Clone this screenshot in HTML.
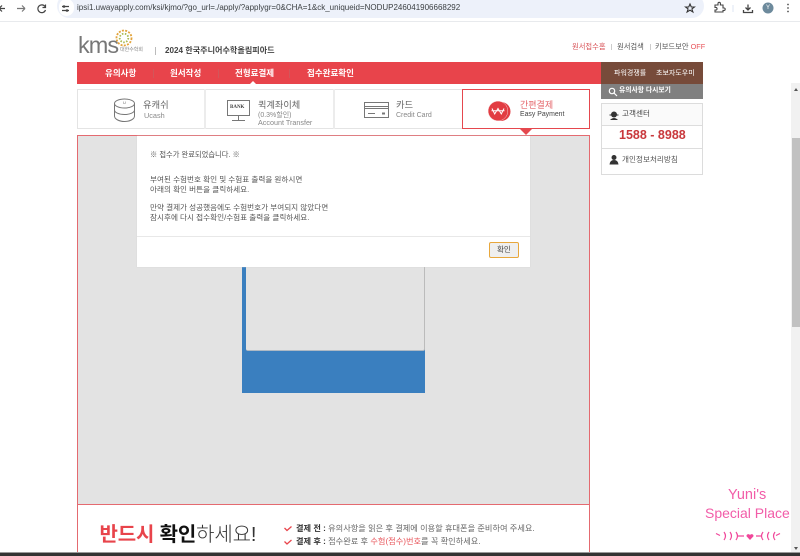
<!DOCTYPE html>
<html lang="ko"><head><meta charset="utf-8"><title>kms</title>
<style>
html,body{margin:0;padding:0;width:800px;height:556px;overflow:hidden;background:#fff}
body{font-family:"Liberation Sans","Noto Sans CJK KR",sans-serif;position:relative}
.a{position:absolute;white-space:nowrap;line-height:1}
.b{position:absolute}
svg{position:absolute;overflow:visible}
</style></head><body>
<!-- browser chrome -->
<div class="b" style="left:0;top:0;width:800px;height:21px;background:#fff;border-bottom:1px solid #e8eaed"></div>
<div class="b" style="left:57px;top:-6px;width:647px;height:24px;background:#edf1fa;border-radius:12px"></div>
<div class="b" style="left:59px;top:-1px;width:15px;height:17px;background:#fff;border-radius:8px"></div>
<svg style="left:0;top:0" width="800" height="21" fill="none">
<path d="M-1 8.500H5M-1 8.500L2 5.500M-1 8.500L2 11.500" stroke="#444" stroke-width="1.200"/>
<path d="M17 8.500H25M25 8.500L22 5.500M25 8.500L22 11.500" stroke="#777" stroke-width="1.200"/>
<path d="M45 6.500A3.900 3.900 0 1 0 45.500 10M45.500 4.500V7.500H42.500" stroke="#444" stroke-width="1.200"/>
<path d="M62 6.500H69M62 10.500H69" stroke="#444" stroke-width="1.200"/>
<circle cx="64" cy="6.500" r="1.300" fill="#444"/><circle cx="67" cy="10.500" r="1.300" fill="#444"/>
<path d="M690 4L691.300 7H694.400L691.900 9L692.900 12L690 10.200L687.100 12L688.100 9L685.600 7H688.700Z" stroke="#333" stroke-width="1.100"/>
<path d="M715 6H718V4.500A1.200 1.200 0 0 1 720.400 4.500V6H723V9H724A1.200 1.200 0 0 1 724 11.400H723V13H715V11H716.400A1.500 1.500 0 0 0 716.400 8.500H715Z" stroke="#444" stroke-width="1.100" transform="translate(0,-1)"/>
<path d="M748 4.500V10M745.500 7.500L748 10L750.500 7.500M743.500 10V12.500H752.500V10" stroke="#444" stroke-width="1.300"/>
<circle cx="768" cy="8" r="5.500" fill="#6d8a9c"/>
<circle cx="788" cy="4.500" r=".9" fill="#555"/><circle cx="788" cy="8" r=".9" fill="#555"/><circle cx="788" cy="11.500" r=".9" fill="#555"/>
<path d="M733 5V12" stroke="#dde6f3" stroke-width="1"/>
</svg>
<div class="a" style="left:766px;top:5px;font-size:6px;color:#fff">Y</div>
<div class="a" style="left:77px;top:4px;font-size:8px;color:#3c4043">ipsi1.uwayapply.com/ksi/kjmo/?go_url=./apply/?applygr=0&amp;CHA=1&amp;ck_uniqueid=NODUP246041906668292</div>

<!-- logo + header -->
<div class="a" style="left:78px;top:34px;font-size:23.500px;color:#777;letter-spacing:-1px">kms</div>
<svg style="left:115px;top:29px" width="19" height="19" fill="none">
<g stroke="#e2a33b" stroke-width="1.800" stroke-dasharray="2 1.300"><circle cx="9" cy="9" r="7.500"/></g>
<g stroke="#a8b84c" stroke-width="1.800" stroke-dasharray="1.500 1.500"><circle cx="9" cy="9" r="4.300"/></g>
</svg>
<div class="a" style="left:120px;top:48px;font-size:5px;color:#888">대한수학회</div>
<div class="b" style="left:155px;top:47px;width:1px;height:8px;background:#bbb"></div>
<div class="a" style="left:165px;top:47px;font-size:8.100px;font-weight:bold;color:#444">2024 한국주니어수학올림피아드</div>
<div class="a" style="left:572px;top:42.500px;font-size:7.300px;color:#d9555a">원서접수홈</div>
<div class="b" style="left:611px;top:44px;width:1px;height:6px;background:#ccc"></div>
<div class="a" style="left:617px;top:42.500px;font-size:7.300px;color:#555">원서검색</div>
<div class="b" style="left:650px;top:44px;width:1px;height:6px;background:#ccc"></div>
<div class="a" style="left:655px;top:42.500px;font-size:7.300px;color:#555">키보드보안 <span style="color:#e8545a">OFF</span></div>

<!-- nav -->
<div class="b" style="left:77px;top:62px;width:524px;height:22px;background:#e8444b"></div>
<div class="b" style="left:601px;top:62px;width:102px;height:22px;background:#774b3a"></div>
<div class="a" style="left:105px;top:69px;font-size:8.500px;font-weight:bold;color:#fff">유의사항</div>
<div class="b" style="left:153px;top:69px;width:1px;height:9px;background:#d2565a"></div>
<div class="a" style="left:170px;top:69px;font-size:8.500px;font-weight:bold;color:#fff">원서작성</div>
<div class="b" style="left:218px;top:69px;width:1px;height:9px;background:#d2565a"></div>
<div class="a" style="left:235px;top:69px;font-size:8.500px;font-weight:bold;color:#fff">전형료결제</div>
<div class="b" style="left:289px;top:69px;width:1px;height:9px;background:#d2565a"></div>
<div class="a" style="left:307px;top:69px;font-size:8.500px;font-weight:bold;color:#fff">접수완료확인</div>
<div class="b" style="left:250px;top:81px;width:0;height:0;border:3px solid transparent;border-bottom-color:#fff;border-top:0"></div>
<div class="a" style="left:614px;top:70px;font-size:7px;color:#fff">파워경쟁률</div>
<div class="a" style="left:656px;top:70px;font-size:7px;color:#fff">초보자도우미</div>

<!-- tabs -->
<div class="b" style="left:77px;top:89px;width:385px;height:38px;border:1px solid #e4e4e4;border-right:0"></div>
<div class="b" style="left:204px;top:89px;width:2px;height:40px;background:#ececec"></div>
<div class="b" style="left:333px;top:89px;width:2px;height:40px;background:#ececec"></div>
<div class="b" style="left:462px;top:89px;width:128px;height:40px;border:1.500px solid #e5484e;box-sizing:border-box;background:#fff"></div>
<div class="b" style="left:520px;top:129px;width:0;height:0;border-left:6px solid transparent;border-right:6px solid transparent;border-top:6px solid #e5484e"></div>
<svg style="left:0;top:0" width="800" height="140" fill="none" stroke="#777" stroke-width="1">
<ellipse cx="124.500" cy="103.500" rx="10" ry="4.500"/>
<path d="M114.500 103.500V110C114.500 112.500 119 114.500 124.500 114.500S134.500 112.500 134.500 110V103.500M114.500 110V116C114.500 119 119 121.500 124.500 121.500S134.500 119 134.500 116V110"/>
<rect x="227.500" y="100.500" width="22" height="15"/>
<path d="M238.500 115.500V120M232 120.500H245"/>
<rect x="364.500" y="102.500" width="24" height="15"/>
<path d="M364.500 106.500H388.500M364.500 108.500H388.500M368 113.500H375"/>
<path d="M382 113.500H385" stroke-width="2"/>
<circle cx="501" cy="111.500" r="9.500" fill="#e23c42" stroke="none"/>
<circle cx="498" cy="111" r="9.800" fill="#e23c42" stroke="#f6c9cb" stroke-width=".5"/>
<path d="M492 108.500L494.700 114L498 108.500L501.300 114L504 108.500M491.500 110.800H504.500" stroke="#fff" stroke-width="1"/>
</svg>
<div class="a" style="left:124.500px;top:100.500px;font-size:4px;color:#666;transform:translateX(-50%)">U</div>
<div class="a" style="left:143px;top:100.500px;font-size:9.300px;color:#666">유캐쉬</div>
<div class="a" style="left:144px;top:111.500px;font-size:7.300px;color:#888">Ucash</div>
<div class="a" style="left:230px;top:105px;font-size:5px;color:#444;font-family:'Liberation Serif',serif;font-weight:bold">BANK</div>
<div class="a" style="left:258px;top:100.500px;font-size:9.200px;color:#666">퀵계좌이체</div>
<div class="a" style="left:258px;top:111.500px;font-size:7px;color:#888">(0.3%할인)</div>
<div class="a" style="left:258px;top:118.500px;font-size:7.200px;color:#888">Account Transfer</div>
<div class="a" style="left:396px;top:100.500px;font-size:9.300px;color:#666">카드</div>
<div class="a" style="left:396px;top:111.500px;font-size:7px;color:#888">Credit Card</div>
<div class="a" style="left:520px;top:100.500px;font-size:9px;color:#e5666b">간편결제</div>
<div class="a" style="left:520px;top:111.500px;font-size:6.900px;color:#444">Easy Payment</div>

<!-- right side -->
<div class="b" style="left:601px;top:84px;width:102px;height:15px;background:#808080"></div>
<svg style="left:608px;top:87px" width="10" height="10" fill="none" stroke="#fff" stroke-width="1.200"><circle cx="4" cy="4" r="2.700"/><path d="M6 6L9 9"/></svg>
<div class="a" style="left:619px;top:88px;font-size:6.800px;font-weight:bold;color:#fff">유의사항 다시보기</div>
<div class="b" style="left:601px;top:103px;width:102px;height:72px;border:1px solid #dcdcdc;box-sizing:border-box;background:#fff"></div>
<div class="b" style="left:602px;top:104px;width:100px;height:21px;background:#fafafa;border-bottom:1px solid #ddd"></div>
<div class="b" style="left:602px;top:148px;width:100px;height:1px;background:#ddd"></div>
<svg style="left:609px;top:111px" width="10" height="10"><circle cx="5" cy="3.500" r="3" fill="#333"/><path d="M1 9Q5 5 9 9Z" fill="#333"/><path d="M0.500 4H9.500" stroke="#333"/></svg>
<div class="a" style="left:622px;top:110px;font-size:7.600px;color:#444">고객센터</div>
<div class="a" style="left:619px;top:129px;font-size:12.500px;font-weight:bold;color:#c9383c">1588 - 8988</div>
<svg style="left:609px;top:155px" width="10" height="10"><circle cx="5" cy="2.500" r="2.500" fill="#333"/><path d="M0.500 9.500Q1 5 5 5T9.500 9.500Z" fill="#333"/></svg>
<div class="a" style="left:622px;top:156px;font-size:7.600px;color:#555">개인정보처리방침</div>

<!-- content -->
<div class="b" style="left:77px;top:135px;width:513px;height:370px;background:#e3e3e3;border:1px solid #e46a70;box-sizing:border-box"></div>
<div class="b" style="left:77px;top:505px;width:1px;height:47px;background:#e46a70"></div>
<div class="b" style="left:589px;top:505px;width:1px;height:47px;background:#e46a70"></div>
<div class="b" style="left:242px;top:260px;width:183px;height:133px;background:#3a7fbf"></div>
<div class="b" style="left:246px;top:260px;width:179px;height:90.500px;background:#e3e3e3;border-right:1px solid #bbb;border-bottom:1px solid #aeb9c4;border-radius:0 0 2px 2px;box-sizing:border-box"></div>
<div class="b" style="left:137px;top:136px;width:393px;height:131px;background:#fff;box-shadow:0 0 1px #ccc"></div>
<div class="a" style="left:150px;top:150.500px;font-size:7.300px;color:#555">※ 접수가 완료되었습니다. ※</div>
<div class="a" style="left:150px;top:176px;font-size:7.600px;color:#555">부여된 수험번호 확인 및 수험표 출력을 원하시면</div>
<div class="a" style="left:150px;top:186px;font-size:7.600px;color:#555">아래의 확인 버튼을 클릭하세요.</div>
<div class="a" style="left:150px;top:203.500px;font-size:7.600px;color:#555">만약 결제가 성공했음에도 수험번호가 부여되지 않았다면</div>
<div class="a" style="left:150px;top:213.500px;font-size:7.600px;color:#555">잠시후에 다시 접수확인/수험표 출력을 클릭하세요.</div>
<div class="b" style="left:137px;top:236px;width:393px;height:1px;background:#e8e8e8"></div>
<div class="b" style="left:489px;top:242px;width:30px;height:16px;background:#efefef;border:1.500px solid #e8a73c;border-radius:2px;box-sizing:border-box"></div>
<div class="a" style="left:497px;top:246px;font-size:7.500px;color:#444">확인</div>

<!-- footer notice -->
<div class="a" style="left:99.500px;top:525px;font-size:20px;color:#333;letter-spacing:-.15px"><b style="color:#e8444b">반드시</b> <b style="color:#111">확인</b><span style="font-weight:300">하세요!</span></div>
<svg style="left:284px;top:525px" width="10" height="30" fill="none" stroke="#e8444b" stroke-width="1.300"><path d="M0.500 3L3 5.500L7.500 1.500"/><path d="M0.500 16.500L3 19L7.500 15"/></svg>
<div class="a" style="left:296px;top:524.500px;font-size:8.200px;color:#666"><b style="color:#333">결제 전 :</b> 유의사항을 읽은 후 결제에 이용할 휴대폰을 준비하여 주세요.</div>
<div class="a" style="left:296px;top:537.500px;font-size:8.200px;color:#666"><b style="color:#333">결제 후 :</b> 접수완료 후 <span style="color:#e8545a">수험(접수)번호</span>를 꼭 확인하세요.</div>

<!-- scrollbar -->
<div class="b" style="left:791px;top:83px;width:9px;height:469px;background:#f1f1f1"></div>
<div class="b" style="left:792px;top:138px;width:8px;height:189px;background:#c1c1c1"></div>
<div class="b" style="left:794px;top:88px;width:0;height:0;border-left:2px solid transparent;border-right:2px solid transparent;border-bottom:3px solid #555"></div>
<div class="b" style="left:794px;top:547px;width:0;height:0;border-left:2px solid transparent;border-right:2px solid transparent;border-top:3px solid #555"></div>
<!-- watermark -->
<div class="a" style="left:728px;top:488px;font-size:14.500px;color:#f25ca8">Yuni's</div>
<div class="a" style="left:705px;top:506px;font-size:14px;color:#f25ca8">Special Place</div>
<svg style="left:714px;top:530px" width="70" height="12" fill="none" stroke="#f0479a" stroke-width="1.200">
<path d="M2 3.500L6 5.500M10 2Q13 6 10 10M16 2Q19 6 16 10M22 2Q25 6 22 10M23 6H30"/>
<path d="M42 6H48M49 2Q46 6 49 10M55 2Q52 6 55 10M61 2Q58 6 61 10M62 5.500L66 3.500"/>
<path d="M36 10L32.500 6.200A1.900 1.900 0 0 1 36 5A1.900 1.900 0 0 1 39.500 6.200Z" fill="#f0479a" stroke="none"/>
</svg>
<!-- bottom bar -->
<div class="b" style="left:0;top:552px;width:800px;height:1px;background:#9a9a9a"></div>
<div class="b" style="left:0;top:553px;width:800px;height:3px;background:#333"></div>
</body></html>
